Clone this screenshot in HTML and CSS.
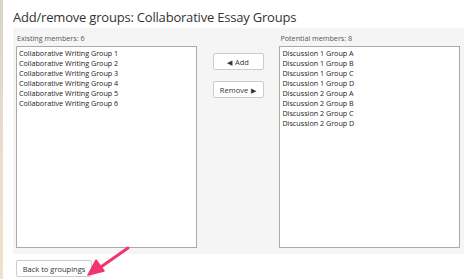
FILE: index.html
```html
<!DOCTYPE html>
<html>
<head>
<meta charset="utf-8">
<link rel="stylesheet" href="styles.css">
</head>
<body>
<div class="strip"></div>
<div class="page">
  <h1 class="title">Add/remove groups: Collaborative Essay Groups</h1>
  <div class="panel">
    <div class="col">
      <div class="label">Existing members: 6</div>
      <div class="listbox">
        <div>Collaborative Writing Group 1</div>
        <div>Collaborative Writing Group 2</div>
        <div>Collaborative Writing Group 3</div>
        <div>Collaborative Writing Group 4</div>
        <div>Collaborative Writing Group 5</div>
        <div>Collaborative Writing Group 6</div>
      </div>
    </div>
    <div class="mid">
      <button class="btn"><span class="tri tri-l">&#9664;</span>Add</button>
      <button class="btn">Remove<span class="tri tri-r">&#9654;</span></button>
    </div>
    <div class="col">
      <div class="label">Potential members: 8</div>
      <div class="listbox">
        <div>Discussion 1 Group A</div>
        <div>Discussion 1 Group B</div>
        <div>Discussion 1 Group C</div>
        <div>Discussion 1 Group D</div>
        <div>Discussion 2 Group A</div>
        <div>Discussion 2 Group B</div>
        <div>Discussion 2 Group C</div>
        <div>Discussion 2 Group D</div>
      </div>
    </div>
  </div>
  <button class="btn back">Back to groupings</button>
</div>
<svg class="arrow" width="60" height="40" viewBox="0 0 60 40">
  <path d="M44 3 L14 24" stroke="#f2346f" stroke-width="3" stroke-linecap="round" fill="none"/>
  <path d="M4 30 L12 15 L20 26 Z" fill="#f2346f" stroke="#f2346f" stroke-width="1.5" stroke-linejoin="round"/>
</svg>
</body>
</html>
```
FILE: styles.css
```css
html, body {
  margin: 0;
  padding: 0;
  background: #fff;
  width: 474px;
  height: 279px;
  overflow: hidden;
  position: relative;
  font-family: "Open Sans", "Liberation Sans", sans-serif;
  color: #333;
}
.strip {
  position: absolute;
  left: 0;
  top: 0;
  width: 3px;
  height: 279px;
  background: linear-gradient(#d9d3c8, #e9dfcc 60%, #efe2c9);
}
.page {
  padding: 0 10px 0 13px;
}
.title {
  margin: 0;
  padding: 8px 0 0 0;
  font-size: 13px;
  letter-spacing: -0.2px;
  font-weight: 400;
  line-height: 19px;
  height: 20px;
  color: #333;
}
.panel {
  background: #f5f5f5;
  display: flex;
  padding: 4px 4px 6px 3px;
  height: 216px;
}
.col {
  display: flex;
  flex-direction: column;
  width: 181px;
}
.label {
  font-size: 7.2px;
  color: #555;
  height: 14px;
  line-height: 12px;
  padding-left: 1px;
}
.listbox {
  flex: 1;
  background: #fff;
  border: 1px solid #aaa;
  padding: 1px 2px;
  font-size: 7.2px;
  line-height: 10px;
  color: #222;
}
.mid {
  width: 83px;
  display: flex;
  flex-direction: column;
  align-items: center;
  padding-top: 21px;
  gap: 11px;
}
.btn {
  font-family: "Open Sans", "Liberation Sans", sans-serif;
  font-size: 7.5px;
  color: #333;
  background: #fff;
  border: 1px solid #ccc;
  border-radius: 2px;
  height: 17px;
  width: 51px;
  padding: 0;
}
.tri {
  font-size: 7px;
}
.tri-l {
  margin-right: 3px;
}
.tri-r {
  margin-left: 3px;
}
.back {
  margin-top: 6px;
  margin-left: 3px;
  width: 76px;
}
.arrow {
  position: absolute;
  left: 84px;
  top: 245px;
}
```
